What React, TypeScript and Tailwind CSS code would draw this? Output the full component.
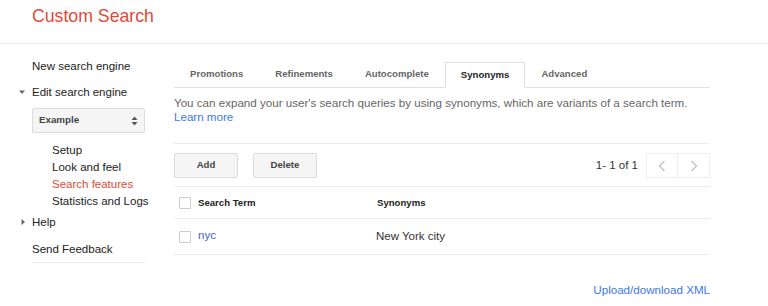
import React from "react";

const tabs = ["Promotions", "Refinements", "Autocomplete", "Synonyms", "Advanced"];

const Caret = ({ down }: { down?: boolean }) => (
  <svg width="6" height="6" viewBox="0 0 6 6" className="fill-[#666]">
    {down ? <path d="M0 1.5h6L3 5z" /> : <path d="M1.5 0v6L5 3z" />}
  </svg>
);

const Checkbox = () => (
  <span className="block w-[12px] h-[12px] border border-[#cccccc] rounded-[1px] bg-white" />
);

export default function App() {
  return (
    <div className="w-[768px] h-[306px] bg-white overflow-hidden font-['Liberation_Sans',Arial,sans-serif] text-[#222]">
      {/* Header */}
      <div className="h-[44px] border-b border-[#ebebeb] pl-[32px] pt-[5px]">
        <span className="text-[17.7px] leading-[22px] text-[#dd4b39]">Custom Search</span>
      </div>

      <div className="flex">
        {/* Sidebar */}
        <div className="w-[174px] pl-[32px] pr-[29px] shrink-0 whitespace-nowrap text-[11.5px]">
          <div className="pt-[14px] leading-[16px]">New search engine</div>
          <div className="mt-[10px] -ml-[13px] flex items-center leading-[16px]">
            <span className="w-[13px] flex"><Caret down /></span>
            Edit search engine
          </div>
          <div className="mt-[8px] h-[25px] flex items-center justify-between bg-[#f5f5f5] border border-[#dcdcdc] rounded-[2px] px-[6px]">
            <span className="text-[9.75px] font-bold text-[#444]">Example</span>
            <svg width="7" height="10" viewBox="0 0 7 10" className="fill-[#555]">
              <path d="M0.5 4L3.5 0.5L6.5 4z M0.5 6L3.5 9.5L6.5 6z" />
            </svg>
          </div>
          <div className="mt-[9px] pl-[20px] leading-[17px]">
            <div>Setup</div>
            <div>Look and feel</div>
            <div className="text-[#dd4b39]">Search features</div>
            <div>Statistics and Logs</div>
          </div>
          <div className="mt-[4px] -ml-[13px] flex items-center leading-[16px]">
            <span className="w-[13px] flex pl-[1px]"><Caret /></span>
            Help
          </div>
          <div className="mt-[11px] pb-[5px] border-b border-[#ebebeb] leading-[16px]">
            Send Feedback
          </div>
        </div>

        {/* Main */}
        <div className="w-[536px] pt-[18px]">
          <div className="flex border-b border-[#e0e0e0] h-[26px]">
            {tabs.map((t) => (
              <div
                key={t}
                className={
                  t === "Synonyms"
                    ? "px-[15px] h-[26px] flex items-center text-[9.6px] font-bold text-[#222] bg-white border border-[#e0e0e0] border-b-white"
                    : "px-[16px] h-[25px] flex items-center text-[9.6px] font-bold text-[#666]"
                }
              >
                {t}
              </div>
            ))}
          </div>

          <div className="mt-[8px] text-[11.6px] leading-[14px] text-[#666]">
            You can expand your user's search queries by using synonyms, which are variants of a search term.
            <div className="text-[#3b78e7]">Learn more</div>
          </div>

          <div className="mt-[19px] border-t border-[#ebebeb] border-b">
            <div className="flex items-center justify-between pt-[9px] pb-[8px]">
              <div className="flex gap-[15px]">
                <button className="w-[64px] h-[25px] bg-[#f5f5f5] border border-[#dcdcdc] rounded-[2px] text-[9.6px] font-bold text-[#444]">
                  Add
                </button>
                <button className="w-[64px] h-[25px] bg-[#f5f5f5] border border-[#dcdcdc] rounded-[2px] text-[9.6px] font-bold text-[#444]">
                  Delete
                </button>
              </div>
              <div className="flex items-center gap-[8px]">
                <span className="text-[11.5px] text-[#333]">1- 1 of 1</span>
                <div className="flex h-[25px] border border-[#eeeeee]">
                  <div className="w-[31px] flex items-center justify-center border-r border-[#eeeeee]">
                    <svg width="8" height="12" viewBox="0 0 8 12" fill="none" stroke="#c2c2c2" strokeWidth="1.4">
                      <path d="M6.5 1L1.5 6l5 5" />
                    </svg>
                  </div>
                  <div className="w-[31px] flex items-center justify-center">
                    <svg width="8" height="12" viewBox="0 0 8 12" fill="none" stroke="#c2c2c2" strokeWidth="1.4">
                      <path d="M1.5 1l5 5-5 5" />
                    </svg>
                  </div>
                </div>
              </div>
            </div>
          </div>

          {/* Table */}
          <div className="flex items-center h-[32px] border-b border-[#ebebeb] pt-[1px]">
            <div className="w-[24px] pl-[5px]"><Checkbox /></div>
            <div className="w-[179px] text-[9.6px] font-bold text-[#222]">Search Term</div>
            <div className="text-[9.6px] font-bold text-[#222]">Synonyms</div>
          </div>
          <div className="flex items-center h-[36px] border-b border-[#ebebeb]">
            <div className="w-[24px] pl-[5px]"><Checkbox /></div>
            <div className="w-[178px] text-[11.5px] text-[#3b5fcf] -mt-[2px]">nyc</div>
            <div className="text-[11.5px] text-[#333]">New York city</div>
          </div>

          <div className="mt-[26px] text-right text-[11.6px] text-[#3b78e7]">Upload/download XML</div>
        </div>
      </div>
    </div>
  );
}
